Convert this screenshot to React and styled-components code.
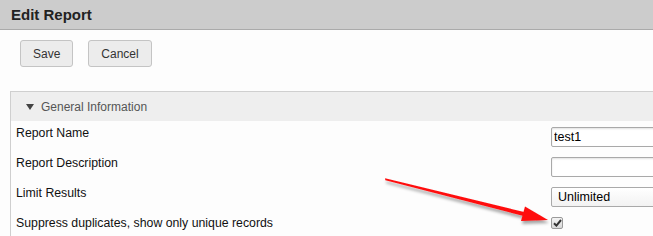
import React from "react";
import styled, { createGlobalStyle } from "styled-components";

const GlobalStyle = createGlobalStyle`
  html, body {
    margin: 0;
    padding: 0;
    background: #fdfdfd;
    overflow: hidden;
  }
  body {
    font-family: "Liberation Sans", Arial, sans-serif;
  }
`;

const Page = styled.div`
  position: relative;
  width: 653px;
  height: 236px;
  overflow: hidden;
`;

const TitleBar = styled.header`
  height: 29px;
  background: #cccccc;
  border-bottom: 1px solid #aaaaaa;
  display: flex;
  align-items: center;
  padding-left: 11px;
  font-size: 15px;
  font-weight: bold;
  color: #222;
`;

const Toolbar = styled.div`
  display: flex;
  gap: 15px;
  padding: 10px 0 0 20px;
  height: 61px;
  box-sizing: border-box;
`;

const Button = styled.button`
  height: 27px;
  padding: 0 12px;
  background: #ececec;
  border: 1px solid #c4c4c4;
  border-radius: 3px;
  font-family: "Liberation Sans", Arial, sans-serif;
  font-size: 12px;
  color: #333;
`;

const Panel = styled.section`
  margin-left: 10px;
  width: 760px;
  border-top: 1px solid #cfcfcf;
  border-left: 1px solid #cfcfcf;
`;

const PanelHeader = styled.div`
  height: 29px;
  background: #eeeeee;
  display: flex;
  align-items: center;
  padding-left: 15px;
  gap: 7px;
  font-size: 12px;
  color: #555;
`;

const Caret = styled.span`
  width: 0;
  height: 0;
  border-left: 4px solid transparent;
  border-right: 4px solid transparent;
  border-top: 6px solid #444;
  margin-top: 1px;
`;

const Row = styled.div`
  display: grid;
  grid-template-columns: 540px 200px;
  height: 30px;
  align-items: start;
`;

const Label = styled.div`
  padding: 5px 0 0 5px;
  font-size: 12.3px;
  line-height: 14px;
  color: #111;
`;

const TextInput = styled.input`
  margin-top: 6px;
  height: 20px;
  box-sizing: border-box;
  width: 200px;
  border: 1px solid #a9a9a9;
  border-radius: 2px;
  box-shadow: inset 0 1px 2px rgba(0, 0, 0, 0.12);
  background: #fff;
  padding: 0 2px;
  font-family: "Liberation Sans", Arial, sans-serif;
  font-size: 12.5px;
  color: #000;
  outline: none;
`;

const Select = styled.div`
  margin-top: 6px;
  height: 20px;
  box-sizing: border-box;
  width: 200px;
  border: 1px solid #a9a9a9;
  border-radius: 2px;
  background: linear-gradient(#ffffff, #f2f2f2);
  padding-left: 6px;
  display: flex;
  align-items: center;
  font-size: 12.5px;
  color: #000;
`;

const Check = styled.span`
  margin-top: 6px;
  width: 12px;
  height: 12px;
  box-sizing: border-box;
  border: 1px solid #9a9a9a;
  border-radius: 2px;
  background: linear-gradient(#f4f4f4, #d8d8d8);
  display: flex;
  align-items: center;
  justify-content: center;
`;

const Overlay = styled.svg`
  position: absolute;
  left: 0;
  top: 0;
  pointer-events: none;
`;

function Arrow() {
  return (
    <Overlay width="653" height="236" viewBox="0 0 653 236">
      <defs>
        <filter id="sh" x="-10%" y="-50%" width="120%" height="200%">
          <feDropShadow dx="1" dy="3" stdDeviation="1.6" floodColor="#000" floodOpacity="0.35" />
        </filter>
      </defs>
      <g filter="url(#sh)" fill="#ff1010">
        <polygon points="385,178.2 385.4,180.2 523.6,216 524,212" />
        <polygon points="548,220 521,221 525,206.5" />
      </g>
    </Overlay>
  );
}

export default function App() {
  return (
    <>
      <GlobalStyle />
      <Page>
        <TitleBar>Edit Report</TitleBar>
        <Toolbar>
          <Button>Save</Button>
          <Button>Cancel</Button>
        </Toolbar>
        <Panel>
          <PanelHeader>
            <Caret />
            General Information
          </PanelHeader>
          <Row>
            <Label>Report Name</Label>
            <TextInput defaultValue="test1" />
          </Row>
          <Row>
            <Label>Report Description</Label>
            <TextInput defaultValue="" />
          </Row>
          <Row>
            <Label>Limit Results</Label>
            <Select>Unlimited</Select>
          </Row>
          <Row>
            <Label>Suppress duplicates, show only unique records</Label>
            <Check>
              <svg width="9" height="8" viewBox="0 0 9 8">
                <path d="M1 4.2 L3.4 6.6 L8 1" fill="none" stroke="#333" strokeWidth="2" />
              </svg>
            </Check>
          </Row>
        </Panel>
        <Arrow />
      </Page>
    </>
  );
}
